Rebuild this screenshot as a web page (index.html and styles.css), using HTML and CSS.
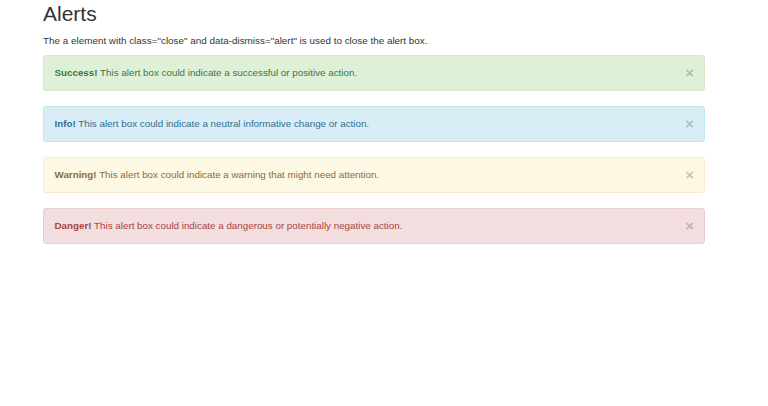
FILE: index.html
```html
<!DOCTYPE html>
<html lang="en">
<head>
<meta charset="utf-8">
<title>Alerts</title>
<link rel="stylesheet" href="styles.css">
</head>
<body>
<div class="container">
  <h2 class="title">Alerts</h2>
  <p class="lead-text">The a element with class="close" and data-dismiss="alert" is used to close the alert box.</p>
  <div class="alert alert-success">
    <span class="msg"><strong>Success!</strong> This alert box could indicate a successful or positive action.</span>
    <a href="#" class="close" aria-label="close">&times;</a>
  </div>
  <div class="alert alert-info">
    <span class="msg"><strong>Info!</strong> This alert box could indicate a neutral informative change or action.</span>
    <a href="#" class="close" aria-label="close">&times;</a>
  </div>
  <div class="alert alert-warning">
    <span class="msg"><strong>Warning!</strong> This alert box could indicate a warning that might need attention.</span>
    <a href="#" class="close" aria-label="close">&times;</a>
  </div>
  <div class="alert alert-danger">
    <span class="msg"><strong>Danger!</strong> This alert box could indicate a dangerous or potentially negative action.</span>
    <a href="#" class="close" aria-label="close">&times;</a>
  </div>
</div>
</body>
</html>
```

FILE: styles.css
```css
* { box-sizing: border-box; }
html, body {
  margin: 0;
  padding: 0;
  background: #fff;
}
body {
  font-family: "Liberation Sans", Arial, sans-serif;
  font-size: 9.9px;
  line-height: 14px;
  color: #333;
}
.container {
  width: 662px;
  margin-left: 43px;
  padding-top: 2px;
}
.title {
  margin: 0 0 9px 0;
  font-size: 21px;
  line-height: 23px;
  font-weight: 400;
  color: #333;
}
.lead-text {
  margin: 0 0 7px 0;
}
.alert {
  display: flex;
  align-items: center;
  justify-content: space-between;
  height: 36px;
  padding: 0 10px 0 10.5px;
  margin-bottom: 15px;
  border: 1px solid transparent;
  border-radius: 3px;
  font-size: 9.8px;
}
.alert strong { font-weight: 700; }
.close {
  font-size: 15px;
  line-height: 14px;
  font-weight: 700;
  color: #000;
  opacity: 0.2;
  text-decoration: none;
}
.alert-success { background: #dff0d8; border-color: #d6e9c6; color: #3c763d; }
.alert-info { background: #d9edf7; border-color: #bce8f1; color: #31708f; }
.alert-warning { background: #fcf8e3; border-color: #faebcc; color: #8a6d3b; }
.alert-danger { background: #f2dede; border-color: #ebccd1; color: #a94442; }
```
